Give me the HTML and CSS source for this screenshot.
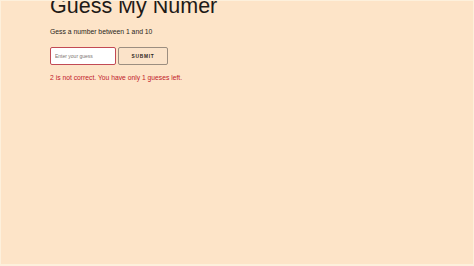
FILE: index.html
```html
<!DOCTYPE html>
<html lang="en">
<head>
<meta charset="utf-8">
<title>Guess My Number</title>
<link rel="stylesheet" href="styles.css">
</head>
<body>
<main class="page">
  <h1 class="title">Guess My Numer</h1>
  <p class="intro">Gess a number between 1 and 10</p>
  <form class="guess-form">
    <input class="guess-input" type="text" placeholder="Enter your guess">
    <button class="submit-btn" type="button">SUBMIT</button>
  </form>
  <p class="message">2 is not correct. You have only 1 gueses left.</p>
</main>
</body>
</html>
```

FILE: styles.css
```css
html {
  margin: 0;
  padding: 0;
  background: #fdf0dc;
  height: 100%;
}
body {
  margin: 1px 1px 2px 1px;
  height: calc(100% - 3px);
  background: #fde4c8;
  font-family: "Liberation Sans", Arial, sans-serif;
  overflow: hidden;
}
.page {
  padding-left: 49px;
}
.title {
  margin: -5px 0 0 0;
  font-size: 21.5px;
  line-height: 21px;
  font-weight: normal;
  color: #1e1a17;
}
.intro {
  margin: 10px 0 0 0;
  font-size: 6.8px;
  line-height: 9px;
  color: #2a2420;
}
.guess-form {
  display: flex;
  gap: 2px;
  margin-top: 11px;
}
.guess-input {
  box-sizing: border-box;
  width: 66px;
  height: 18px;
  margin: 0;
  padding: 0 4px;
  border: 1px solid #c24a55;
  border-radius: 2px;
  background: #ffffff;
  font-family: "Liberation Sans", Arial, sans-serif;
  font-size: 5px;
  outline: none;
}
.guess-input::placeholder {
  color: #7a7470;
}
.submit-btn {
  box-sizing: border-box;
  width: 50px;
  height: 18px;
  margin: 0;
  padding: 0;
  border: 1px solid #9c8e80;
  border-radius: 2px;
  background: #fbe3c9;
  font-family: "Liberation Sans", Arial, sans-serif;
  font-size: 4.8px;
  font-weight: bold;
  letter-spacing: 0.8px;
  color: #2e2620;
}
.message {
  margin: 8px 0 0 0;
  font-size: 6.75px;
  line-height: 9px;
  color: #c2202a;
}
```
